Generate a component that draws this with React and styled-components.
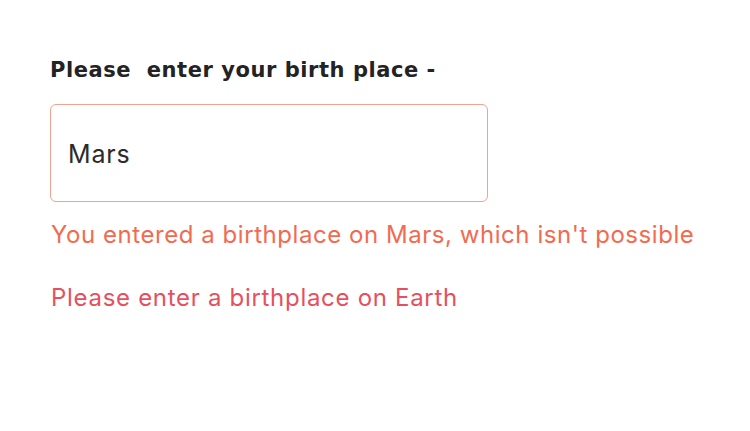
import React from 'react'
import styled, { createGlobalStyle } from 'styled-components'

const GlobalStyle = createGlobalStyle`
  html, body {
    margin: 0;
    padding: 0;
    background: #ffffff;
  }
  body {
    font-family: Inter, "Noto Sans", sans-serif;
    -webkit-font-smoothing: antialiased;
  }
`

const Wrapper = styled.div`
  display: flex;
  flex-direction: column;
  align-items: flex-start;
  padding: 55px 0 0 50px;
`

const Label = styled.label`
  font-family: "DejaVu Sans", Inter, sans-serif;
  font-size: 21px;
  font-weight: 700;
  color: #232323;
  letter-spacing: 0.55px;
  white-space: pre;
  line-height: 30px;
`

const Field = styled.div`
  box-sizing: border-box;
  width: 438px;
  height: 98px;
  margin-top: 19px;
  border: 1.5px solid #f1a390;
  border-radius: 6px;
  display: flex;
  align-items: center;
  padding: 2px 17px 0;
`

const Input = styled.input`
  border: none;
  outline: none;
  background: transparent;
  width: 100%;
  height: 34px;
  font-family: inherit;
  font-size: 25px;
  letter-spacing: 0.8px;
  color: #2b2b2b;
  padding: 0;
`

const Message = styled.p`
  margin: ${({ $first }) => ($first ? '17px' : '31px')} 0 0 1px;
  font-size: 24px;
  line-height: 32px;
  letter-spacing: ${({ $spacing }) => $spacing}px;
  color: ${({ $tone }) => $tone};
`

const App = () => (
  <Wrapper>
    <GlobalStyle />
    <Label htmlFor="birthplace">Please  enter your birth place -</Label>
    <Field>
      <Input id="birthplace" defaultValue="Mars" />
    </Field>
    <Message $first $tone="#f26b50" $spacing={0.55}>
      You entered a birthplace on Mars, which isn't possible
    </Message>
    <Message $tone="#e6505e" $spacing={0.7}>
      Please enter a birthplace on Earth
    </Message>
  </Wrapper>
)

export default App
